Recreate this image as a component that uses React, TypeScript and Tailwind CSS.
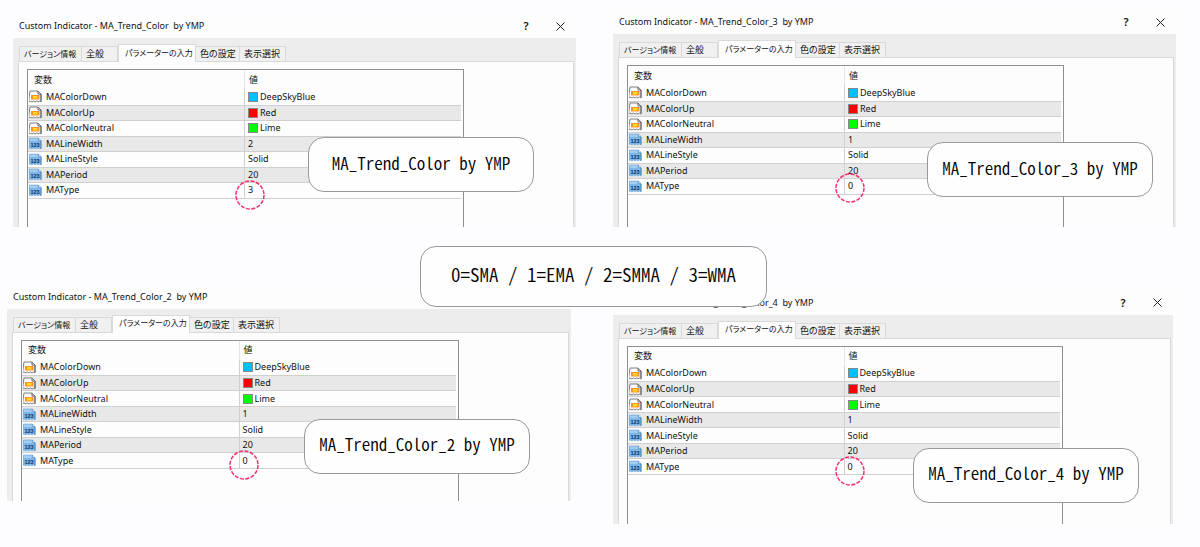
import { clsx } from "clsx";
import type { ReactNode } from "react";

interface Param {
    name: string;
    value: string;
    swatch?: string;
}

interface IndicatorWindowProps {
    title: string;
    label: string;
    lineWidth: string;
    maType: string;
    hasControls?: boolean;
    bodyClassName?: string;
    listClassName: string;
    labelClassName: string;
    ringClassName: string;
}

const tabs = [
    { name: "バージョン情報", width: "w-[63px]", kana: true },
    { name: "全般", width: "w-9" },
    { name: "パラメーターの入力", width: "w-[78px]", active: true, kana: true },
    { name: "色の設定", width: "w-11" },
    { name: "表示選択", width: "w-[46px]" },
];

function getParams(lineWidth: string, maType: string): Param[] {
    return [
        { name: "MAColorDown", value: "DeepSkyBlue", swatch: "bg-[#00bfff]" },
        { name: "MAColorUp", value: "Red", swatch: "bg-[#ff0000]" },
        { name: "MAColorNeutral", value: "Lime", swatch: "bg-[#00ff00]" },
        { name: "MALineWidth", value: lineWidth },
        { name: "MALineStyle", value: "Solid" },
        { name: "MAPeriod", value: "20" },
        { name: "MAType", value: maType },
    ];
}

function ColorIcon() {
    return (
        <svg className="h-[13px] w-[13px] shrink-0" viewBox="0 0 26 26" aria-hidden="true">
            <path d="M2 2h16l6 6v16l-3-2-3 2-3-2-3 2-3-2-3 2-4-2-3 2z" fill="#fbfbfb" stroke="#808080" strokeWidth="2" />
            <path d="M18 2v6h6v15" fill="none" stroke="#5f5f5f" strokeWidth="2" />
            <rect x="4" y="10" width="17" height="9" fill="#f9922b" />
            <rect x="8" y="12" width="9" height="5" fill="#ffd91f" />
        </svg>
    );
}

function NumberIcon() {
    return (
        <svg className="h-[13px] w-[13px] shrink-0" viewBox="0 0 26 26" aria-hidden="true">
            <path d="M1 2h18l5 5v17l-3-2-3 2-3-2-3 2-3-2-3 2-4-2-4 2z" fill="#7fb6e8" stroke="#6299cc" strokeWidth="1" />
            <path d="M2 3h15v5H2z" fill="#a4cdf2" />
            <path d="M19 2v5h5" fill="#d6e9fa" stroke="#4d80b3" strokeWidth="1" />
            <path d="M24 8v15" stroke="#4d80b3" strokeWidth="2" />
            <text x="12" y="19" textAnchor="middle" fontSize="11" fontWeight="700" fill="#0b3260" fontFamily="Liberation Sans">123</text>
        </svg>
    );
}

function Callout({ className, children }: { className: string; children: ReactNode }) {
    return (
        <div
            className={clsx(
                "absolute z-10 flex items-center justify-center whitespace-pre border border-[#999] bg-[#fefefe] pb-1 font-['Noto_Sans_CJK_JP',sans-serif] text-black [font-feature-settings:'hwid'] [font-weight:350]",
                className
            )}
        >
            {children}
        </div>
    );
}

function TabStrip() {
    return (
        <div role="tablist" className="flex h-6 items-end pl-px">
            {tabs.map((tab) => (
                <button
                    key={tab.name}
                    type="button"
                    role="tab"
                    aria-selected={!!tab.active}
                    className={clsx(
                        "flex shrink-0 items-center whitespace-nowrap border border-[#d9d9d9] leading-3 [font-feature-settings:'palt']",
                        tab.width,
                        tab.kana ? "text-[8px]" : "text-[9px]",
                        tab.active ? "h-[18px] border-b-0 bg-[#fdfdfd] pb-0.5 pl-1.5" : "h-4 border-l-0 bg-[#f0f0f0] pl-1 first:border-l"
                    )}
                >
                    {tab.name}
                </button>
            ))}
        </div>
    );
}

function ParamTable({ params }: { params: Param[] }) {
    return (
        <table className="w-full table-fixed border-collapse text-left">
            <thead>
                <tr className="h-[19px]">
                    <th className="w-1/2 p-0 pl-1.5 font-normal">変数</th>
                    <th className="border-l border-[#e5e5e5] p-0 pl-1 font-normal">値</th>
                </tr>
            </thead>
            <tbody>
                {params.map((param) => (
                    <tr key={param.name} className="border-b border-[#d0d0d0] odd:h-4 even:h-[15px] even:bg-[#e8e8e8]">
                        <td className="p-0 pl-px">
                            <div className="flex items-center gap-1">
                                {param.swatch ? <ColorIcon /> : <NumberIcon />}
                                {param.name}
                            </div>
                        </td>
                        <td className="border-l border-[#d0d0d0] p-0 pl-[3px]">
                            <div className="flex items-center gap-0.5">
                                {param.swatch && <span className={clsx("h-2.5 w-2.5 border border-[#888]", param.swatch)} />}
                                {param.value}
                            </div>
                        </td>
                    </tr>
                ))}
            </tbody>
        </table>
    );
}

function IndicatorWindow({
    title,
    label,
    lineWidth,
    maType,
    hasControls = true,
    bodyClassName = "pr-[109px]",
    listClassName,
    labelClassName,
    ringClassName,
}: IndicatorWindowProps) {
    return (
        <section className="relative bg-[#fdfdfd] text-[9px] leading-[14px] text-[#111]">
            <header className="flex h-6 items-center justify-between pl-1.5 pr-[11px]">
                <h2 className="whitespace-pre">{title}</h2>
                {hasControls && (
                    <div className="flex items-center gap-6">
                        <button type="button" aria-label="Help" className="w-3 text-[11px] font-semibold">?</button>
                        <button type="button" aria-label="Close">
                            <svg className="h-[9px] w-[9px]" viewBox="0 0 9 9" stroke="#222" strokeWidth="1">
                                <path d="M0.5 0.5l8 8M8.5 0.5l-8 8" />
                            </svg>
                        </button>
                    </div>
                )}
            </header>
            <div className="bg-[#ededed] pl-[5px] pr-0.5">
                <TabStrip />
                <div className={clsx("-mt-px border-x border-t border-[#d9d9d9] bg-[#fdfdfd] pl-2 pt-[7px]", bodyClassName)}>
                    <div className={clsx("border-x border-t border-[#8c9097] pr-0.5", listClassName)}>
                        <ParamTable params={getParams(lineWidth, maType)} />
                    </div>
                </div>
            </div>
            <svg className={clsx("absolute left-[222px] h-[30px] w-[30px]", ringClassName)} viewBox="0 0 30 30" aria-hidden="true">
                <circle cx="15" cy="15" r="14" fill="none" stroke="#f5326f" strokeWidth="1.5" strokeDasharray="4 1.5" />
            </svg>
            <Callout className={clsx("h-[55px] w-[226px] rounded-2xl text-[17px]", labelClassName)}>{label}</Callout>
        </section>
    );
}

export default function App() {
    return (
        <main className="relative grid min-h-screen grid-cols-2 bg-[#fdfdff] font-['Noto_Sans','Noto_Sans_CJK_JP',sans-serif]">
            <div className="flex flex-col gap-[58px] pt-3.5">
                <div className="pl-[13px] pr-6">
                    <IndicatorWindow
                        title="Custom Indicator - MA_Trend_Color  by YMP"
                        label="MA_Trend_Color by YMP"
                        lineWidth="2"
                        maType="3"
                        listClassName="pb-7"
                        labelClassName="right-[42px] top-[123px]"
                        ringClassName="top-[166px]"
                    />
                </div>
                <div className="pl-[7px] pr-[29px]">
                    <IndicatorWindow
                        title="Custom Indicator - MA_Trend_Color_2  by YMP"
                        label="MA_Trend_Color_2 by YMP"
                        lineWidth="1"
                        maType="0"
                        hasControls={false}
                        listClassName="pb-8"
                        labelClassName="right-[41px] top-[134px]"
                        ringClassName="top-[165px]"
                    />
                </div>
            </div>
            <div className="flex flex-col gap-16 pt-2.5">
                <div className="pl-[13px] pr-6">
                    <IndicatorWindow
                        title="Custom Indicator - MA_Trend_Color_3  by YMP"
                        label="MA_Trend_Color_3 by YMP"
                        lineWidth="1"
                        maType="0"
                        listClassName="pb-8"
                        labelClassName="right-[23px] top-[132px]"
                        ringClassName="top-[163px]"
                    />
                </div>
                <div className="pl-[13px] pr-[27px]">
                    <IndicatorWindow
                        title="Custom Indicator - MA_Trend_Color_4  by YMP"
                        label="MA_Trend_Color_4 by YMP"
                        lineWidth="1"
                        maType="0"
                        bodyClassName="pr-[107px]"
                        listClassName="pb-[49px]"
                        labelClassName="right-[34px] top-[157px]"
                        ringClassName="top-[165px]"
                    />
                </div>
            </div>
            <Callout className="left-[35%] top-[246px] h-[61px] w-[347px] rounded-2xl text-[19px]">
                0=SMA / 1=EMA / 2=SMMA / 3=WMA
            </Callout>
        </main>
    );
}
